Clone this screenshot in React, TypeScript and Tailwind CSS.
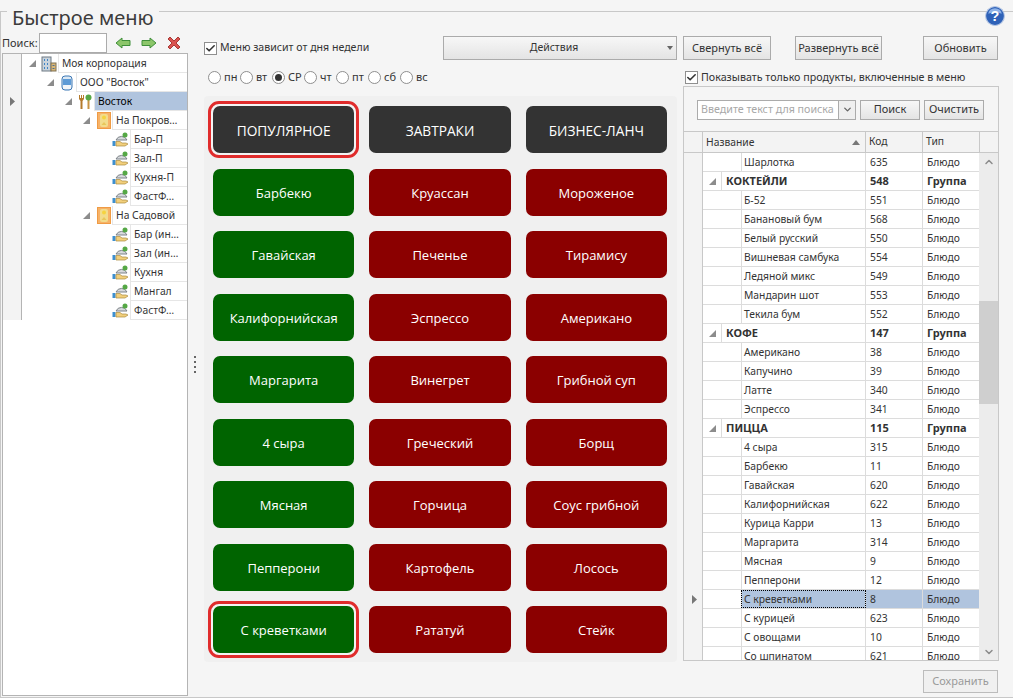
import React from 'react';
import { Check, ChevronDown, ChevronUp } from 'lucide-react';

const days = ['пн', 'вт', 'СР', 'чт', 'пт', 'сб', 'вс'];

const tabs = ['ПОПУЛЯРНОЕ', 'ЗАВТРАКИ', 'БИЗНЕС-ЛАНЧ'];

const dishes = [
  ['Барбекю', 'Круассан', 'Мороженое'],
  ['Гавайская', 'Печенье', 'Тирамису'],
  ['Калифорнийская', 'Эспрессо', 'Американо'],
  ['Маргарита', 'Винегрет', 'Грибной суп'],
  ['4 сыра', 'Греческий', 'Борщ'],
  ['Мясная', 'Горчица', 'Соус грибной'],
  ['Пепперони', 'Картофель', 'Лосось'],
  ['С креветками', 'Рататуй', 'Стейк'],
];

const tree = [
  { label: 'Моя корпорация', level: 0, icon: 'corp' },
  { label: 'ООО "Восток"', level: 1, icon: 'db' },
  { label: 'Восток', level: 2, icon: 'fork', selected: true },
  { label: 'На Покров…', level: 3, icon: 'light' },
  { label: 'Бар-П', level: 4, icon: 'hand' },
  { label: 'Зал-П', level: 4, icon: 'hand' },
  { label: 'Кухня-П', level: 4, icon: 'hand' },
  { label: 'ФастФ…', level: 4, icon: 'hand' },
  { label: 'На Садовой', level: 3, icon: 'light' },
  { label: 'Бар (ин…', level: 4, icon: 'hand' },
  { label: 'Зал (ин…', level: 4, icon: 'hand' },
  { label: 'Кухня', level: 4, icon: 'hand' },
  { label: 'Мангал', level: 4, icon: 'hand' },
  { label: 'ФастФ…', level: 4, icon: 'hand' },
];

const products = [
  ['Шарлотка', '635'],
  ['КОКТЕЙЛИ', '548', 'group'],
  ['Б-52', '551'],
  ['Банановый бум', '568'],
  ['Белый русский', '550'],
  ['Вишневая самбука', '554'],
  ['Ледяной микс', '549'],
  ['Мандарин шот', '553'],
  ['Текила бум', '552'],
  ['КОФЕ', '147', 'group'],
  ['Американо', '38'],
  ['Капучино', '39'],
  ['Латте', '340'],
  ['Эспрессо', '341'],
  ['ПИЦЦА', '115', 'group'],
  ['4 сыра', '315'],
  ['Барбекю', '11'],
  ['Гавайская', '620'],
  ['Калифорнийская', '622'],
  ['Курица Карри', '13'],
  ['Маргарита', '314'],
  ['Мясная', '9'],
  ['Пепперони', '12'],
  ['С креветками', '8', 'selected'],
  ['С курицей', '623'],
  ['С овощами', '10'],
  ['Со шпинатом', '621'],
];

const treeIndent = ['w-[35px]', 'w-[53px]', 'w-[71px]', 'w-[89px]', 'w-[107px]'];

function Expander() {
  return (
    <svg width="7" height="7" viewBox="0 0 7 7" className="shrink-0">
      <path d="M7 0V7H0Z" fill="#8c8c8c" />
    </svg>
  );
}

function RowArrow() {
  return (
    <svg width="5" height="9" viewBox="0 0 5 9">
      <path d="M0 0L5 4.5L0 9Z" fill="#777777" />
    </svg>
  );
}

function TreeIcon({ type }: { type: string }) {
  if (type === 'corp') {
    return (
      <svg width="16" height="16" viewBox="0 0 16 16">
        <rect x="1" y="1" width="9" height="14" fill="#c9d3dc" stroke="#6f7a84" />
        <path d="M3 3h1v2H3zM6 3h1v2H6zM3 7h1v2H3zM6 7h1v2H6zM3 11h1v2H3zM6 11h1v2H6z" fill="#3f83c4" />
        <rect x="10" y="7" width="5" height="8" fill="#d8b677" stroke="#7f7152" />
        <path d="M11.5 9h2v1h-2zM11.5 12h2v1h-2z" fill="#4b6f95" />
      </svg>
    );
  }
  if (type === 'db') {
    return (
      <svg width="16" height="16" viewBox="0 0 16 16">
        <rect x="3" y="1" width="10" height="14" rx="3" fill="#dbe8f4" stroke="#3d78b5" />
        <rect x="4" y="4" width="8" height="6" fill="#5e9bd6" />
        <rect x="4" y="10" width="8" height="4" rx="1" fill="#f3f6f9" />
      </svg>
    );
  }
  if (type === 'fork') {
    return (
      <svg width="16" height="16" viewBox="0 0 16 16">
        <path d="M2 1v4l1.5 2V15h2V7L7 5V1H6v3H5V1H4v3H3V1z" fill="#b47a2c" />
        <rect x="10.5" y="6" width="2" height="9" fill="#c89344" />
        <circle cx="11.5" cy="3.5" r="3" fill="#57a845" />
      </svg>
    );
  }
  if (type === 'light') {
    return (
      <svg width="16" height="17" viewBox="0 0 16 17">
        <rect x="2.5" y="0.5" width="13" height="16" fill="#f7b267" stroke="#ef9b45" />
        <rect x="5" y="2" width="8" height="13" rx="2" fill="#f2dc8c" />
        <circle cx="9" cy="5.5" r="2" fill="#f5d33f" />
        <path d="M9 10l2.5 3h-5z" fill="#e8c65a" />
      </svg>
    );
  }
  return (
    <svg width="17" height="15" viewBox="0 0 17 15">
      <path d="M4 8a6 6 0 0 1 11 0z" fill="#d7dadd" stroke="#7d8388" />
      <circle cx="13" cy="3" r="2.5" fill="#55a845" />
      <rect x="0.5" y="9" width="3" height="5" fill="#3d8fd0" />
      <path d="M4 9.5h4l2 1.5h4l2 1-3 2H4z" fill="#f2cf7c" stroke="#a98a3e" strokeWidth="0.7" />
    </svg>
  );
}

function CheckBox() {
  return (
    <span className="flex h-[13px] w-[13px] shrink-0 items-center justify-center border border-[#8f8f8f] bg-white">
      <Check className="h-[11px] w-[11px] text-[#333333]" strokeWidth={3.5} />
    </span>
  );
}

function GrayButton({ label, width }: { label: string; width: string }) {
  return (
    <button className={`h-[24px] ${width} shrink-0 border border-[#ababab] bg-gradient-to-b from-[#f7f7f7] to-[#e4e4e4] text-center text-[#333333]`}>
      {label}
    </button>
  );
}

function MenuButton({ label, tone, size, marked }: { label: string; tone: string; size: string; marked?: boolean }) {
  const button = (
    <button className={`h-[47px] w-full rounded-[7px] pt-[3px] ${tone} font-['Open_Sans','Noto_Sans',sans-serif] ${size} text-white`}>
      {label}
    </button>
  );
  if (!marked) return button;
  return (
    <div className="-m-[5px] rounded-[11px] border-[3px] border-[#e02c2c] bg-[#f4f4f4] p-[2px]">{button}</div>
  );
}

function ProductRow({ name, code, kind }: { name: string; code: string; kind?: string }) {
  const group = kind === 'group';
  const selected = kind === 'selected';
  const text = group ? 'text-[11px] font-bold' : 'text-[10.3px]';
  return (
    <div className={`flex h-[19px] shrink-0 border-b border-[#dcdcdc] leading-[18px] text-[#333333] ${text} ${selected ? 'bg-[#b0c4de]' : 'bg-white'}`}>
      <div className={`flex shrink-0 items-center bg-white ${group ? 'w-[18px] justify-end pr-[5px]' : 'w-[38px]'}`}>
        {group && <Expander />}
      </div>
      <div
        className={`shrink-0 truncate border-r border-l border-[#dcdcdc] ${group ? 'w-[145px] pl-[4px]' : 'w-[125px] pl-[2px]'} ${selected ? 'outline-1 -outline-offset-1 outline-dotted outline-black' : ''}`}
      >
        {name}
      </div>
      <div className="w-[57px] shrink-0 border-r border-[#dcdcdc] pl-[4px]">{code}</div>
      <div className="flex-1 pl-[4px]">{group ? 'Группа' : 'Блюдо'}</div>
    </div>
  );
}

export default function App() {
  return (
    <div className="h-[698px] w-[1013px] overflow-hidden bg-[#f5f5f5] pt-[11px] font-['Noto_Sans',sans-serif] text-[11px] text-[#333333]">
      <div className="flex h-[687px] flex-col border border-r-0 border-[#c8c8c8] pl-[1px] pb-[1px]">
        <div className="-mt-[11px] flex h-[32px] shrink-0 items-start justify-between">
          <h1 className="mt-[4px] ml-[5px] bg-[#f5f5f5] px-[5px] text-[20px] leading-[26px] font-normal text-[#3c3c3c]">Быстрое меню</h1>
          <svg width="20" height="20" viewBox="0 0 18 18" className="mt-[5px] mr-[8px]">
            <circle cx="9" cy="9" r="8.5" fill="#2f62b8" stroke="#b9c9e4" />
            <path d="M3 7a6 5 0 0 1 12 0a8 4 0 0 0-12 0z" fill="#8eb2e8" />
            <text x="9" y="13.5" textAnchor="middle" fontSize="13" fontWeight="700" fill="#ffffff" fontFamily="Liberation Sans">?</text>
          </svg>
        </div>
        <div className="flex min-h-0 flex-1">
          {/* left: search + tree */}
          <div className="flex w-[186px] shrink-0 flex-col">
            <div className="flex h-[20px] shrink-0 items-center">
              <span className="w-[37px]">Поиск:</span>
              <span className="h-[20px] w-[68px] border border-[#ababab] bg-white" />
              <svg width="16" height="12" viewBox="0 0 16 12" className="ml-[8px]">
                <path d="M1 6L7 1V3.5H15V8.5H7V11Z" fill="#8cc66a" stroke="#3f8f3a" />
              </svg>
              <svg width="16" height="12" viewBox="0 0 16 12" className="ml-[10px]">
                <path d="M15 6L9 1V3.5H1V8.5H9V11Z" fill="#8cc66a" stroke="#3f8f3a" />
              </svg>
              <svg width="14" height="14" viewBox="0 0 14 14" className="ml-[10px]">
                <path d="M1 3L3 1L7 5L11 1L13 3L9 7L13 11L11 13L7 9L3 13L1 11L5 7Z" fill="#d9534f" stroke="#a83a36" />
              </svg>
            </div>
            <div className="flex min-h-0 flex-1 flex-col border border-[#b4b4b4] bg-white">
              <div className="flex h-[266px] shrink-0">
                <div className="w-[19px] shrink-0 border-r border-[#b4b4b4] bg-[#f3f3f3] pt-[43px] pl-[7px]">
                  <RowArrow />
                </div>
                <div className="min-w-0 flex-1">
                  {tree.map((item, index) => (
                    <div key={index} className="flex h-[19px] items-center">
                      <div className={`flex shrink-0 items-center justify-end gap-[5px] ${treeIndent[item.level]}`}>
                        {item.level < 4 && <Expander />}
                        <TreeIcon type={item.icon} />
                      </div>
                      <div className={`ml-[1px] h-[19px] min-w-0 flex-1 truncate border-b border-l border-[#e6e6e6] pl-[3px] text-[10.3px] leading-[18px] ${item.selected ? 'bg-[#b0c4de] text-black' : ''}`}>
                        {item.label}
                      </div>
                    </div>
                  ))}
                </div>
              </div>
            </div>
          </div>
          {/* splitter */}
          <div className="flex w-[16px] shrink-0 flex-col items-center justify-center gap-[3px] pr-[3px]">
            <span className="h-[2px] w-[2px] bg-[#666666]" />
            <span className="h-[2px] w-[2px] bg-[#666666]" />
            <span className="h-[2px] w-[2px] bg-[#666666]" />
            <span className="h-[2px] w-[2px] bg-[#666666]" />
          </div>
          {/* centre and right */}
          <div className="flex min-w-0 flex-1 flex-col">
            <div className="mt-[2px] flex h-[26px] shrink-0 items-center">
              <CheckBox />
              <span className="ml-[3px] w-[223px] text-[10.6px]">Меню зависит от дня недели</span>
              <div className="relative flex h-[24px] w-[234px] items-center justify-center border border-[#ababab] bg-gradient-to-b from-[#f7f7f7] to-[#e4e4e4] pr-[12px] text-[10.5px]">
                Действия
                <span className="absolute right-[3px] border-x-[3px] border-t-[4px] border-x-transparent border-t-[#666666]" />
              </div>
              <div className="ml-[6px]"><GrayButton label="Свернуть всё" width="w-[88px]" /></div>
              <div className="ml-[24px]"><GrayButton label="Развернуть всё" width="w-[87px]" /></div>
              <div className="ml-[41px]"><GrayButton label="Обновить" width="w-[75px]" /></div>
            </div>
            <div className="flex min-h-0 flex-1">
              <div className="flex w-[479px] shrink-0 flex-col">
                <div className="flex h-[35px] shrink-0 items-center gap-[3px] pb-[3px] pl-[4px]">
                  {days.map((day) => (
                    <label key={day} className="flex items-center gap-[3px]">
                      <span className="flex h-[13px] w-[13px] items-center justify-center rounded-full border border-[#8f8f8f] bg-white">
                        {day === 'СР' && <span className="h-[7px] w-[7px] rounded-full bg-[#333333]" />}
                      </span>
                      <span className="w-[13px] whitespace-nowrap">{day}</span>
                    </label>
                  ))}
                </div>
                <div className="grid w-[473px] grid-cols-3 gap-x-[15px] gap-y-[15.5px] rounded-[4px] bg-[#f0f0f0] pt-[10px] pr-[10px] pb-[9px] pl-[9px]">
                  {tabs.map((tab, index) => (
                    <MenuButton key={tab} label={tab} tone="bg-[#333333]" size="text-[13.7px]" marked={index === 0} />
                  ))}
                  {dishes.map((row) =>
                    row.map((dish, index) => (
                      <MenuButton
                        key={dish}
                        label={dish}
                        tone={index === 0 ? 'bg-[#006400]' : 'bg-[#8b0000]'}
                        size="text-[13px]"
                        marked={dish === 'С креветками'}
                      />
                    )),
                  )}
                </div>
              </div>
              <div className="flex w-[316px] shrink-0 flex-col">
                <div className="flex h-[25px] shrink-0 items-center gap-[3px] pt-[7px] pl-[2px]">
                  <CheckBox />
                  <span className="text-[10.7px]">Показывать только продукты, включенные в меню</span>
                </div>
                <div className="flex h-[575px] shrink-0 flex-col border border-[#c8c8c8]">
                  <div className="flex h-[45px] shrink-0 items-center border-b border-[#c8c8c8] pl-[13px] pt-[1px]">
                    <div className="flex h-[20px] w-[159px] items-center border border-[#ababab] bg-white">
                      <span className="flex-1 overflow-hidden pl-[3px] text-[10.7px] whitespace-nowrap text-[#a8a8a8]">Введите текст для поиска</span>
                      <span className="flex h-full w-[17px] shrink-0 items-center justify-center border-l border-[#ababab] bg-[#efefef]">
                        <ChevronDown className="h-[11px] w-[11px] text-[#666666]" strokeWidth={3} />
                      </span>
                    </div>
                    <button className="ml-[4px] h-[20px] w-[60px] border border-[#ababab] bg-gradient-to-b from-[#f7f7f7] to-[#e4e4e4]">Поиск</button>
                    <button className="ml-[4px] h-[20px] w-[60px] border border-[#ababab] bg-gradient-to-b from-[#f7f7f7] to-[#e4e4e4]">Очистить</button>
                  </div>
                  <div className="flex h-[21px] shrink-0 border-b border-[#c8c8c8] bg-[#f3f3f3] text-[10.3px] leading-[19px]">
                    <div className="w-[19px] shrink-0 border-r border-[#c8c8c8]" />
                    <div className="flex w-[163px] shrink-0 items-center justify-between border-r border-[#c8c8c8] pl-[3px] pr-[5px]">
                      <span>Название</span>
                      <span className="border-x-[4px] border-b-[5px] border-x-transparent border-b-[#777777]" />
                    </div>
                    <div className="w-[57px] shrink-0 border-r border-[#c8c8c8] pl-[3px]">Код</div>
                    <div className="w-[57px] shrink-0 border-r border-[#c8c8c8] pl-[3px]">Тип</div>
                  </div>
                  <div className="flex min-h-0 flex-1 overflow-hidden">
                    <div className="w-[19px] shrink-0 border-r border-[#c8c8c8] bg-[#f3f3f3] pt-[442px] pl-[8px]">
                      <RowArrow />
                    </div>
                    <div className="flex w-[276px] shrink-0 flex-col">
                      {products.map(([name, code, kind]) => (
                        <ProductRow key={name} name={name} code={code} kind={kind} />
                      ))}
                    </div>
                    <div className="flex flex-1 flex-col items-center bg-[#ececec]">
                      <ChevronUp className="mt-[3px] h-[12px] w-[12px] shrink-0 text-[#8c8c8c]" strokeWidth={3} />
                      <div className="mt-[133px] h-[103px] w-full shrink-0 bg-[#cfcfcf]" />
                      <div className="flex-1" />
                      <ChevronDown className="mb-[2px] h-[12px] w-[12px] shrink-0 text-[#8c8c8c]" strokeWidth={3} />
                    </div>
                  </div>
                </div>
                <div className="mt-[9px] flex justify-end pr-[1px]">
                  <button className="h-[23px] w-[75px] border border-[#bcbcbc] bg-[#f0f0f0] text-[#9a9a9a]">Сохранить</button>
                </div>
              </div>
            </div>
          </div>
        </div>
      </div>
    </div>
  );
}
